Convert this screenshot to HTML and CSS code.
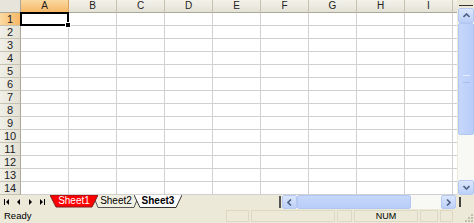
FILE: index.html
```html
<!DOCTYPE html>
<html>
<head>
<meta charset="utf-8">
<link rel="stylesheet" href="styles.css">
</head>
<body>
<div class="app">
  <div class="main">
    <div class="sheet">
      <div class="corner"></div>
      <div class="ch sel">A</div><div class="ch">B</div><div class="ch">C</div><div class="ch">D</div><div class="ch">E</div><div class="ch">F</div><div class="ch">G</div><div class="ch">H</div><div class="ch">I</div><div class="ch last"></div>
    </div>
    <div class="vscroll">
      <div class="split"></div>
      <div class="sbtn up"><svg width="7" height="5" viewBox="0 0 7 5"><path d="M0.5 4 L3.5 1 L6.5 4" fill="none" stroke="#4d6185" stroke-width="1.6"/></svg></div>
      <div class="vthumb"><span class="grip"></span></div>
      <div class="vtrack"></div>
      <div class="sbtn down"><svg width="7" height="5" viewBox="0 0 7 5"><path d="M0.5 1 L3.5 4 L6.5 1" fill="none" stroke="#4d6185" stroke-width="1.6"/></svg></div>
    </div>
  </div>
  <div class="tabbar">
    <div class="nav">
      <svg width="50" height="14" viewBox="0 0 50 14">
        <rect x="4" y="4" width="1" height="6" fill="#000"/><path d="M6 7 L9 4 V10 Z" fill="#000"/>
        <path d="M17 7 L20 4 V10 Z" fill="#000"/>
        <path d="M29 4 V10 L32 7 Z" fill="#000"/>
        <path d="M40 4 V10 L43 7 Z" fill="#000"/><rect x="44" y="4" width="1" height="6" fill="#000"/>
      </svg>
    </div>
    <div class="tabs">
      <div class="tab red"><svg class="tabshape" width="48" height="13" viewBox="0 0 48 13"><path d="M0 0 L6 12 H42 L48 0 Z" fill="#f00" stroke="#7a1a1a" stroke-width="1"/></svg><span>Sheet1</span></div>
      <div class="tab"><svg class="tabshape" width="46" height="13" viewBox="0 0 46 13"><path d="M0 0 L5 12.5 H41 L46 0" fill="#f1efe2" stroke="#555" stroke-width="1"/></svg><span>Sheet2</span></div>
      <div class="tab active"><svg class="tabshape" width="48" height="13" viewBox="0 0 48 13"><path d="M0 0 L6 12.5 H42 L48 0" fill="#fff" stroke="#333" stroke-width="1"/></svg><span>Sheet3</span></div>
    </div>
    <div class="filler"></div>
    <div class="splitter"></div>
    <div class="hscroll">
      <div class="sbtn hb"><svg width="5" height="7" viewBox="0 0 5 7"><path d="M4 0.5 L1 3.5 L4 6.5" fill="none" stroke="#4d6185" stroke-width="1.6"/></svg></div>
      <div class="hthumb"><span class="hgrip"></span></div>
      <div class="htrack"></div>
      <div class="sbtn hb"><svg width="5" height="7" viewBox="0 0 5 7"><path d="M1 0.5 L4 3.5 L1 6.5" fill="none" stroke="#4d6185" stroke-width="1.6"/></svg></div>
    </div>
    <div class="endbar"></div>
  </div>
  <div class="status">
    <div class="ready">Ready</div>
    <div class="panel p1"></div>
    <div class="panel p2"></div>
    <div class="panel p3"></div>
    <div class="panel p4">NUM</div>
    <div class="panel p5"></div>
    <div class="panel p6"></div>
    <div class="sgrip"><svg width="12" height="12" viewBox="0 0 12 12"><g fill="#c2bfae"><rect x="9" y="3" width="2" height="2"/><rect x="6" y="6" width="2" height="2"/><rect x="9" y="6" width="2" height="2"/><rect x="3" y="9" width="2" height="2"/><rect x="6" y="9" width="2" height="2"/><rect x="9" y="9" width="2" height="2"/></g></svg></div>
  </div>
</div>
<script>
(function(){
  var sheet=document.querySelector('.sheet');
  var html='';
  for(var r=1;r<=14;r++){
    html+='<div class="rh'+(r===1?' sel':'')+'">'+r+'</div>';
    for(var c=0;c<10;c++){
      var cls='cell'+(c===9?' last':'');
      if(r===1&&c===0) cls+=' active';
      html+='<div class="'+cls+'"></div>';
    }
  }
  sheet.insertAdjacentHTML('beforeend',html);
})();
</script>
</body>
</html>
```
FILE: styles.css
```css
html, body {
  margin: 0;
  padding: 0;
  background: #fff;
}
body {
  width: 474px;
  height: 223px;
  overflow: hidden;
  font-family: "Liberation Sans", Arial, sans-serif;
}
.app {
  display: grid;
  grid-template-rows: 195px 14px 14px;
  width: 474px;
  height: 223px;
}
.main {
  display: flex;
  overflow: hidden;
}
.sheet {
  flex: 1;
  display: grid;
  grid-template-columns: 21px repeat(9, 48px) 1fr;
  grid-template-rows: repeat(15, 13px);
  overflow: hidden;
}
.corner {
  background: #e7e5db;
  border-right: 1px solid #aca899;
  border-bottom: 1px solid #aca899;
  box-sizing: border-box;
}
.ch {
  background: linear-gradient(#f3f2ea, #e4e2d6);
  border-right: 1px solid #c5c2b2;
  border-bottom: 1px solid #aca899;
  box-sizing: border-box;
  font-size: 10px;
  line-height: 12px;
  text-align: center;
  color: #222;
}
.ch.sel {
  background: linear-gradient(#fbd9a2, #f6b866);
  border-right-color: #d8a15a;
  border-bottom-color: #c4893a;
}
.ch.last { border-right: none; }
.rh {
  background: linear-gradient(90deg, #f1f0e8, #e3e1d5);
  border-right: 1px solid #aca899;
  border-bottom: 1px solid #c5c2b2;
  box-sizing: border-box;
  font-size: 11px;
  line-height: 12px;
  text-align: center;
  color: #222;
}
.rh.sel {
  background: linear-gradient(90deg, #fbd9a2, #f6b866);
  border-right-color: #c4893a;
}
.cell {
  border-right: 1px solid #d0d0d0;
  border-bottom: 1px solid #d0d0d0;
  box-sizing: border-box;
  background: #fff;
}
.cell.last { border-right: none; }
.cell.active {
  position: relative;
  border: none;
}
.cell.active::before {
  content: "";
  position: absolute;
  left: -1px; top: -1px; right: 0; bottom: 0;
  border: 2px solid #000;
}
.cell.active::after {
  content: "";
  position: absolute;
  right: -2px; bottom: -2px;
  width: 4px; height: 4px;
  background: #000;
  border: 1px solid #fff;
}
.vscroll {
  width: 17px;
  display: flex;
  flex-direction: column;
  background: #f7f6f0;
  border-left: 1px solid #ece9d8;
  box-sizing: border-box;
}
.split {
  height: 8px;
  background: #ece9d8;
  border-top: 5px solid #ece9d8;
  box-sizing: border-box;
  position: relative;
}
.split::before {
  content: "";
  position: absolute;
  left: 1px; right: 1px; top: 0;
  height: 1px;
  background: #333;
}
.sbtn {
  display: flex;
  align-items: center;
  justify-content: center;
  background: linear-gradient(#dbe6fd, #bcd0f8);
  border: 1px solid #b6c9f1;
  border-radius: 2px;
  box-sizing: border-box;
}
.sbtn.up, .sbtn.down { height: 15px; }
.vthumb {
  height: 112px;
  background: linear-gradient(90deg, #c7d7fb, #b8cdf9);
  border: 1px solid #b1c6f2;
  border-radius: 2px;
  box-sizing: border-box;
  display: flex;
  align-items: center;
  justify-content: center;
}
.grip {
  width: 7px;
  height: 6px;
  border-top: 1px solid #e6eeff;
  border-bottom: 1px solid #a8bde9;
}
.vtrack { flex: 1; background: #f8f8f4; }
.tabbar {
  display: flex;
  background: #ece9d8;
  align-items: stretch;
}
.nav { width: 50px; display: flex; align-items: center; }
.tabs {
  display: flex;
  align-items: flex-start;
  margin-left: 0;
}
.tab {
  position: relative;
  height: 13px;
  width: 46px;
  margin-right: -5px;
  font-size: 10px;
  line-height: 12px;
  text-align: center;
  color: #000;
}
.tab.red { width: 48px; color: #fff; }
.tab.active { width: 48px; font-weight: bold; z-index: 2; }
.tab.red { z-index: 1; }
.tabshape { position: absolute; left: 0; top: 0; }
.tab span { position: relative; }
.filler { flex: 1; }
.splitter {
  width: 2px;
  margin: 1px 1px 1px 0;
  background: #555;
}
.hscroll {
  width: 174px;
  display: flex;
  background: #f8f8f4;
  height: 14px;
}
.sbtn.hb { width: 15px; }
.hthumb {
  width: 114px;
  background: linear-gradient(#c7d7fb, #b8cdf9);
  border: 1px solid #b1c6f2;
  border-radius: 2px;
  box-sizing: border-box;
}
.htrack { flex: 1; }
.endbar {
  width: 15px;
  border-left: 2px solid #444;
  margin: 2px 0 2px 3px;
  box-sizing: border-box;
}
.status {
  display: flex;
  background: #ece9d8;
  font-size: 9.5px;
  line-height: 14px;
  color: #000;
}
.ready { width: 225px; padding-left: 4px; box-sizing: border-box; }
.panel {
  margin: 1px 1px;
  border: 1px solid #dcd8c4;
  box-sizing: border-box;
  text-align: center;
  font-size: 9px;
  line-height: 11px;
}
.p1 { width: 23px; }
.p2 { width: 84px; }
.p3 { width: 15px; }
.p4 { width: 64px; }
.p5 { width: 18px; }
.p6 { width: 13px; }
.sgrip { flex: 1; display: flex; align-items: flex-end; justify-content: flex-end; }
```
